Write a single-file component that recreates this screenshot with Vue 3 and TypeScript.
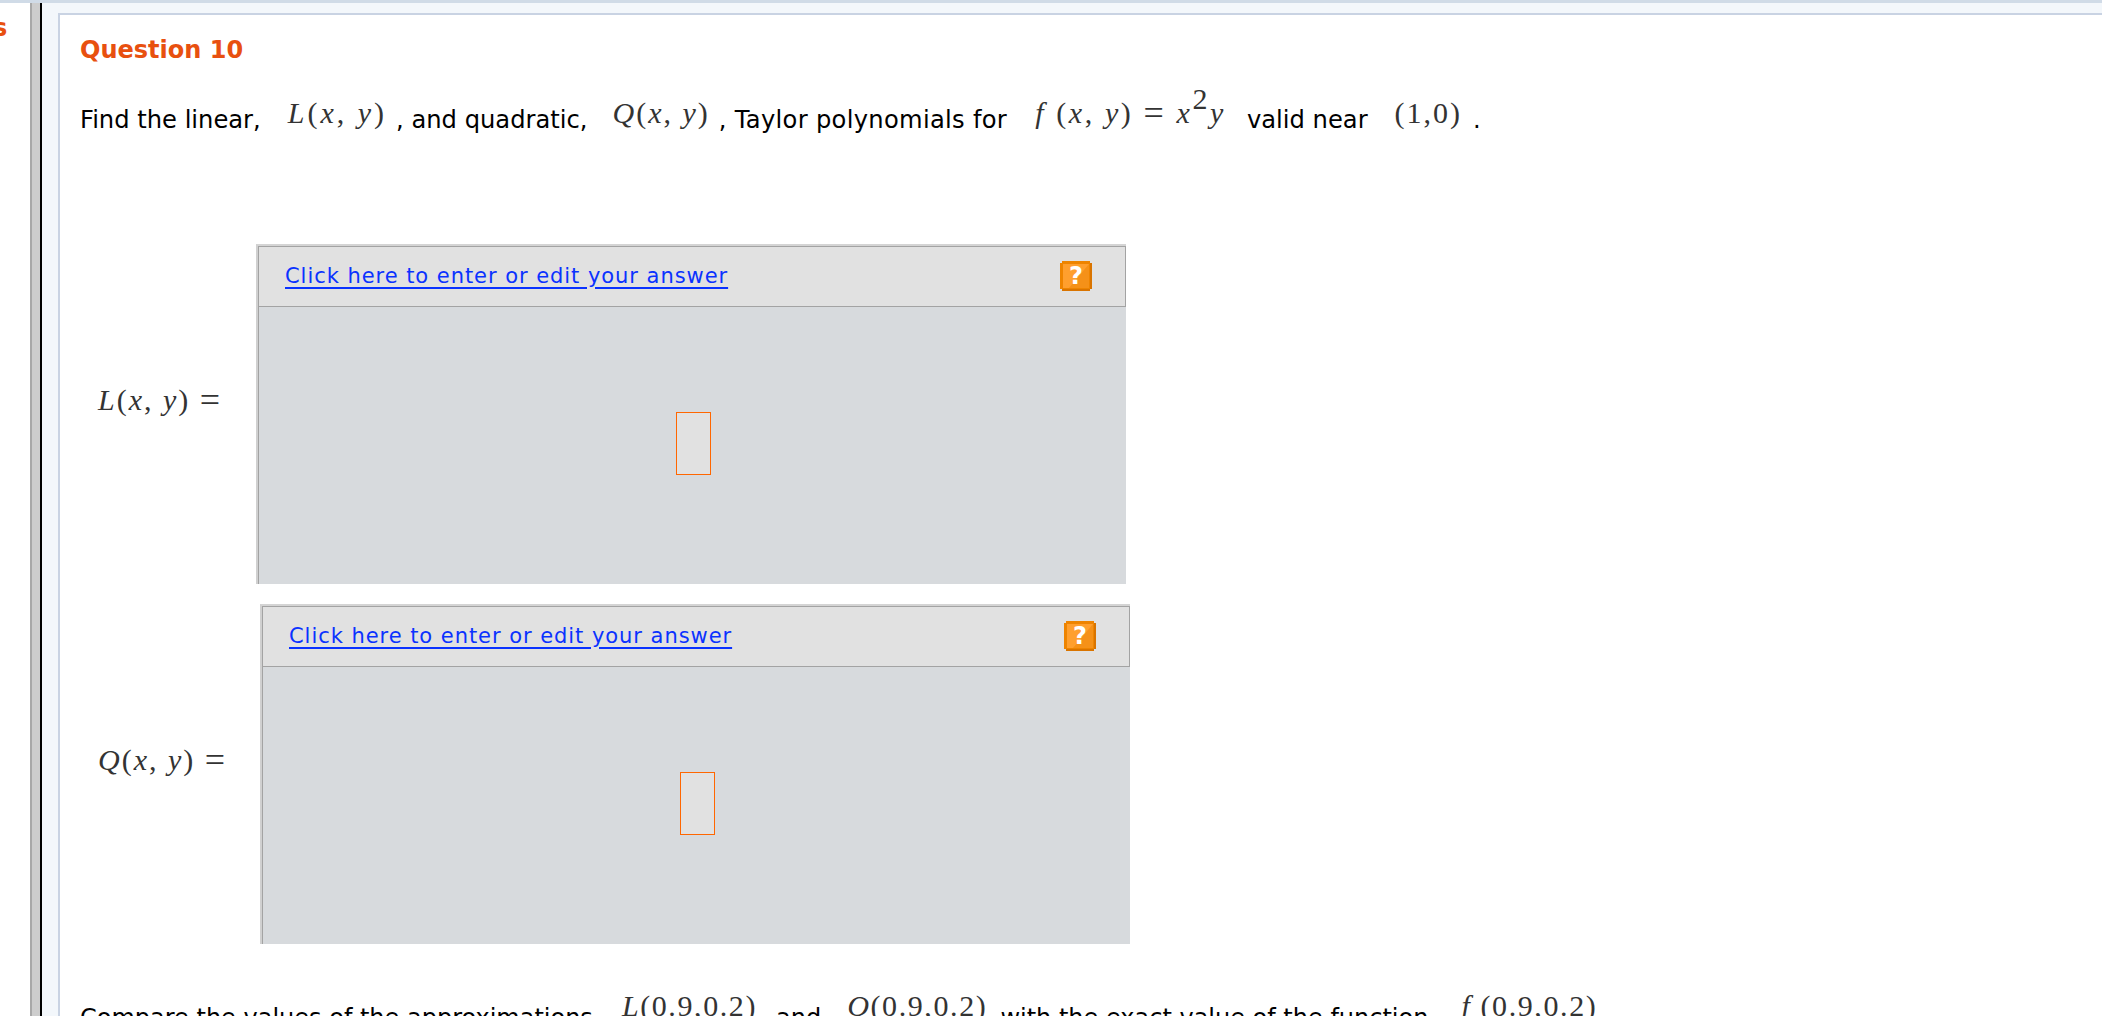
<script setup lang="ts">
interface AnswerRow {
  fn: string
  labelClass: string
}

const answers: AnswerRow[] = [
  { fn: 'L', labelClass: 'label-l' },
  { fn: 'Q', labelClass: 'label-q' },
]
</script>

<template>
  <div class="page">
    <aside class="sidebar">
      <span class="cut-title">s</span>
    </aside>
    <div class="divider"></div>
    <div class="gutter">
      <main class="panel">
        <h2 class="title">Question 10</h2>
        <p class="line first">
          Find the linear,<span class="math m-l"><i>L</i>(<i>x</i>, <i>y</i>)</span>, and quadratic,<span class="math m-q"><i>Q</i>(<i>x</i>, <i>y</i>)</span><span class="taylor">, Taylor polynomials for</span><span class="math m-f"><i>f</i> (<i>x</i>, <i>y</i>) <span class="eq">=</span> <i>x</i><sup>2</sup><i>y</i></span>valid near<span class="math m-p">(1,0)</span>.
        </p>

        <div v-for="row in answers" :key="row.fn" class="answer-row" :class="row.labelClass">
          <div class="answer-label math"><i>{{ row.fn }}</i>(<i>x</i>, <i>y</i>) <span class="eq">=</span></div>
          <div class="answer-box">
            <div class="box-head">
              <a class="edit-link" href="#">Click here to enter or edit your answer</a>
              <svg class="help" width="32" height="30" viewBox="0 0 32 30">
                <path d="M2 0h28v2h2v26h-2v2H2v-2H0V2h2z" fill="#ee8400" />
                <path d="M2 28h28v2H2zM30 2h2v26h-2z" fill="#d97400" />
                <rect x="3" y="3" width="26" height="24" fill="#ff9f2e" />
                <path d="M29 3v24H9z" fill="#f59118" />
                <text x="16" y="23" text-anchor="middle" class="help-mark">?</text>
              </svg>
            </div>
            <div class="box-body">
              <span class="slot"></span>
            </div>
          </div>
        </div>

        <p class="line compare">
          Compare the values of the approximations<span class="math sm m-a"><i>L</i>(0.9,0.2)</span>and<span class="math sm m-b"><i>Q</i>(0.9,0.2)</span>with the exact value of the function<span class="math sm m-c"><i>f</i> (0.9,0.2)</span>
        </p>
      </main>
    </div>
  </div>
</template>

<style>
html,
body {
  margin: 0;
  background: #fff;
}
</style>

<style scoped>
.page {
  display: flex;
  height: 1013px;
  overflow: hidden;
  border-top: 3px solid #d0dbe7;
  background: #fff;
  font-family: "DejaVu Sans", Verdana, sans-serif;
}

.sidebar {
  width: 30px;
  flex: none;
  overflow: hidden;
}

.cut-title {
  display: block;
  margin: 12px 0 0 -7px;
  color: #e8500f;
  font-size: 24px;
  font-weight: 700;
  line-height: 26px;
}

.divider {
  width: 8px;
  flex: none;
  border-left: 2px solid #a8a8a8;
  border-right: 2px solid #000;
  background: #cdcdcd;
}

.gutter {
  flex: 1;
  min-width: 0;
  padding: 10px 0 0 16px;
  background: #f3f7fb;
}

.panel {
  height: 100%;
  padding: 22px 0 0 20px;
  border-top: 2px solid #c9d3e3;
  border-left: 2px solid #c9d3e3;
  background: #fff;
  box-sizing: border-box;
}

.title {
  margin: 0;
  color: #e8500f;
  font-size: 24px;
  font-weight: 700;
  line-height: 26px;
}

.line {
  margin: 0;
  color: #000;
  font-size: 24.2px;
  line-height: 30px;
  white-space: nowrap;
}

.first {
  margin-top: 36px;
}

.taylor {
  letter-spacing: 0.3px;
}

.math {
  color: #333;
  font-family: "Liberation Serif", "Times New Roman", serif;
  font-size: 30px;
  letter-spacing: 2px;
  vertical-align: 5px;
  line-height: 0;
}

.math sup {
  font-size: 30px;
  line-height: 0;
  vertical-align: 14px;
}

.eq {
  font-size: 36px;
  line-height: 0;
  vertical-align: -2px;
}

.m-l {
  margin: 0 9px 0 27px;
  letter-spacing: 3px;
}

.m-q {
  margin: 0 9px 0 25px;
}

.m-f {
  margin: 0 21px 0 28px;
  letter-spacing: 2.6px;
}

.m-p {
  margin: 0 11px 0 27px;
}

.answer-row {
  display: flex;
  align-items: center;
  margin-top: 20px;
}

.label-l {
  margin-top: 109px;
}

.answer-label {
  flex: none;
  padding: 0 0 28px 18px;
  box-sizing: border-box;
  line-height: 34px;
}

.label-l .answer-label {
  width: 176px;
}

.label-q .answer-label {
  width: 180px;
}

.answer-box {
  width: 870px;
  height: 340px;
  flex: none;
  display: flex;
  flex-direction: column;
  border-top: 2px solid #d4d4d4;
  border-left: 2px solid #d0d0d0;
  box-sizing: border-box;
}

.box-head {
  display: flex;
  align-items: center;
  justify-content: space-between;
  height: 61px;
  padding: 0 33px 2px 26px;
  border: 1px solid #a3a3a3;
  background: #e1e1e1;
  box-sizing: border-box;
}

.edit-link {
  color: #0a32ff;
  font-size: 21px;
  letter-spacing: 0.95px;
  text-decoration: underline;
  text-underline-offset: 4px;
}

.help {
  flex: none;
}

.help-mark {
  fill: #fff;
  font-family: "DejaVu Sans", sans-serif;
  font-size: 24px;
  font-weight: 700;
}

.box-body {
  flex: 1;
  padding: 105px 0 0 417px;
  border-left: 1px solid #a3a3a3;
  background: #d7dadd;
}

.slot {
  display: block;
  width: 35px;
  height: 63px;
  border: 1px solid #f60;
  background: #e1e1e1;
  box-sizing: border-box;
}

.compare {
  margin-top: 59px;
  font-size: 24px;
}

.sm {
  font-size: 30px;
  letter-spacing: 1.6px;
  vertical-align: 10px;
}

.m-a {
  margin: 0 19px 0 29px;
}

.m-b {
  margin: 0 13px 0 26px;
}

.m-c {
  margin-left: 33px;
}
</style>
